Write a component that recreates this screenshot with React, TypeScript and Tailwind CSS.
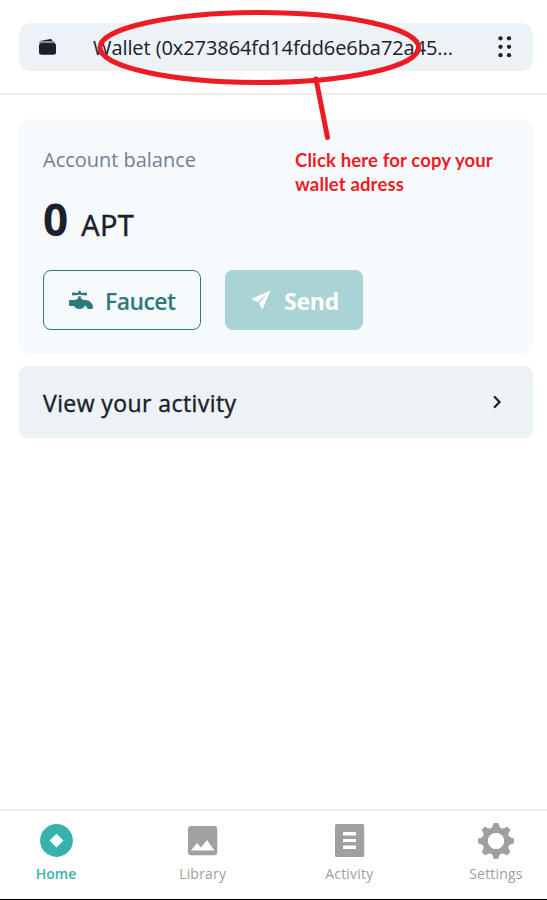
import React from "react";
import { FaFaucet } from "react-icons/fa";
import { IoIosSend } from "react-icons/io";

const TEETH = [0, 45, 90, 135, 180, 225, 270, 315];

function WalletIcon() {
  return (
    <svg width="20" height="20" viewBox="0 0 20 20" fill="#1a202c">
      <path d="M3 4L13.500 2Q15 1.800 15.300 4z" />
      <path d="M2 6.200V5.500Q2.300 4 4 4H16Q18 4 18.300 6.200z" fill="#858b94" />
      <rect x="2" y="6" width="17" height="11.700" rx="2.500" />
    </svg>
  );
}

function GripIcon() {
  return (
    <svg width="14" height="22" viewBox="0 0 14 22" fill="#1a202c">
      {[2.3, 10.8, 19.2].map((y) => (
        <g key={y}>
          <circle cx="2.5" cy={y} r="2.15" />
          <circle cx="11" cy={y} r="2.15" />
        </g>
      ))}
    </svg>
  );
}

function HomeIcon() {
  return (
    <svg width="36" height="36" viewBox="0 0 36 36">
      <circle cx="18.500" cy="17.500" r="16.400" fill="#38b2ac" />
      <path d="M18.500 10.700l6.900 6.900-6.900 6.900-6.900-6.900z" fill="white" />
    </svg>
  );
}

function LibraryIcon() {
  return (
    <svg width="36" height="36" viewBox="0 0 36 36">
      <rect x="3" y="3" width="29.200" height="29.200" rx="3" fill="#a0a0a0" />
      <path d="M6 27.500l6-7.500 4 4.500 6-7.500 7.500 10.500z" fill="white" />
    </svg>
  );
}

function ActivityIcon() {
  return (
    <svg width="36" height="36" viewBox="0 0 36 36">
      <rect x="4" y="1" width="29.200" height="33" rx="1.500" fill="#a0a0a0" />
      <path d="M12 9h13v3.500h-13zM12 16h13v3h-13zM12 22.500h13v3.500h-13z" fill="white" />
    </svg>
  );
}

function SettingsIcon() {
  return (
    <svg width="36" height="36" viewBox="0 0 36 36" fill="#a0a0a0">
      {TEETH.map((a) => (
        <path key={a} d="M15.500 0.600Q15.600 0 16.300 0H19.700Q20.400 0 20.500 0.600Q21 4.500 24.500 6.500L18 11L11.500 6.500Q15 4.500 15.500 0.600z" transform={`rotate(${a} 18 18)`} />
      ))}
      <circle cx="18" cy="18" r="10.500" fill="none" stroke="#a0a0a0" strokeWidth="5" />
      <circle cx="18" cy="18" r="8" fill="white" />
    </svg>
  );
}

function NavItem({ label, active, children }: { label: string; active?: boolean; children: React.ReactNode }) {
  return (
    <div className={`flex w-[60px] flex-col items-center ${active ? "font-semibold text-[#38b2ac]" : "tracking-[0.2px] text-[#a0a0a0]"}`}>
      {children}
      <span className="mt-[5px] text-[14px] leading-[20px]">{label}</span>
    </div>
  );
}

export default function App() {
  return (
    <div className="relative flex h-[900px] w-[547px] flex-col overflow-hidden bg-white font-['Open_Sans','Noto_Sans',sans-serif] text-[#1a202c]">
      <header className="h-[95px] border-b-2 border-[#eeeeee] pt-[23px] pr-[14px] pl-[19px]">
        <div className="flex h-12 items-center rounded-xl bg-[#edf2f7] pr-[21px] pl-[18px]">
          <WalletIcon />
          <span className="ml-[36px] pt-[2px] text-[20px] leading-6 tracking-[-0.08px] whitespace-nowrap">Wallet (0x273864fd14fdd6e6ba72a45...</span>
          <div className="ml-auto">
            <GripIcon />
          </div>
        </div>
      </header>

      <main className="flex flex-1 flex-col gap-3 pt-6 pr-[14px] pl-[19px]">
        <section className="h-[235px] rounded-xl bg-[#f7fafc] px-6 pt-[26px]">
          <p className="text-[20px] leading-[30px] tracking-[-0.02px] text-[#718096]">Account balance</p>
          <p className="mt-[14px] flex h-[60px] items-baseline">
            <span className="text-[44px] leading-[60px] font-bold">0</span>
            <span className="ml-[13px] text-[29px] tracking-[0.4px] [-webkit-text-stroke:0.5px_#1a202c]">APT</span>
          </p>
          <div className="mt-[21px] flex gap-6">
            <button className="flex h-[60px] w-[158px] items-center rounded-lg border border-[#2c7a7b] pl-[25px] text-[#2c7a7b]">
              <FaFaucet size={24} />
              <span className="ml-[12px] pt-[2px] text-[23px] font-semibold tracking-[-0.6px]">Faucet</span>
            </button>
            <button className="flex h-[60px] w-[138px] items-center rounded-lg bg-[#a9d3d4] pl-[24px] text-white">
              <IoIosSend size={24} />
              <span className="ml-[11px] pt-[2px] text-[23px] font-bold tracking-[-0.2px]">Send</span>
            </button>
          </div>
        </section>

        <button className="flex h-[72px] items-center justify-between rounded-lg bg-[#edf2f7] pr-[30px] pl-6">
          <span className="pt-[2px] text-[23px] tracking-[0.42px] [-webkit-text-stroke:0.4px_#1a202c]">View your activity</span>
          <svg width="12" height="16" viewBox="0 0 12 16" fill="none" stroke="#1a202c" strokeWidth="2.200" strokeLinecap="round">
            <path d="M3.700 3L8.500 8L3.700 13" />
          </svg>
        </button>
      </main>

      <nav className="flex h-[91px] justify-between border-t-2 border-b border-t-[#eeeeee] border-b-black pt-[12px] pr-[21px] pl-[26px]">
        <NavItem label="Home" active><HomeIcon /></NavItem>
        <NavItem label="Library"><LibraryIcon /></NavItem>
        <NavItem label="Activity"><ActivityIcon /></NavItem>
        <NavItem label="Settings"><SettingsIcon /></NavItem>
      </nav>

      <svg className="absolute top-0 left-0" width="547" height="150" viewBox="0 0 547 150" fill="none" stroke="#ed1c24" strokeWidth="5">
        <ellipse cx="259.300" cy="47.500" rx="159.300" ry="35" />
        <path d="M316 79L327.500 137.500" strokeLinecap="round" />
      </svg>
      <p className="absolute top-[148px] left-[295px] font-['Lato',sans-serif] text-[18.500px] leading-6 font-bold tracking-[0.140px] whitespace-nowrap text-[#ed1c24]">
        Click here for copy your<br />wallet adress
      </p>
    </div>
  );
}
